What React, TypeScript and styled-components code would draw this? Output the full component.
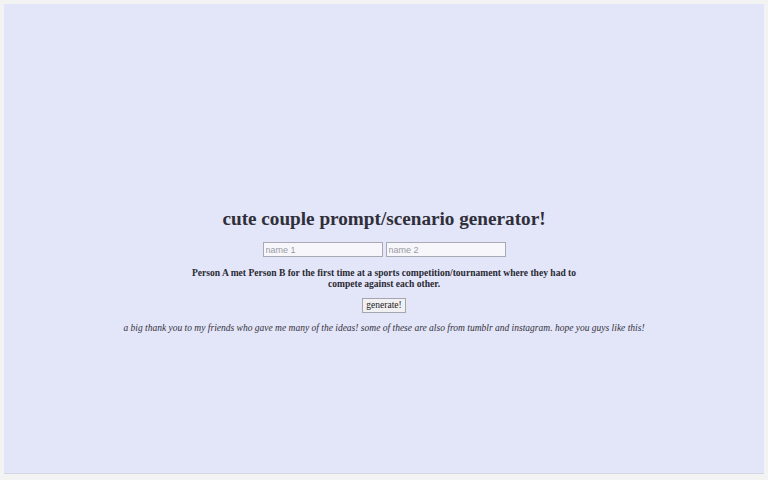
import React from "react";
import styled, { createGlobalStyle } from "styled-components";

const Global = createGlobalStyle`
  html, body {
    margin: 0;
    padding: 0;
    background: #f3f3f3;
  }
  body {
    font-family: "Liberation Serif", "Times New Roman", serif;
    color: #2e2e38;
  }
`;

const Page = styled.main`
  margin: 4px;
  height: 470px;
  box-sizing: border-box;
  background: #e3e5f8;
  border-bottom: 1px solid #d6d6e2;
  display: flex;
  flex-direction: column;
  align-items: center;
  padding-top: 203px;
`;

const Title = styled.h1`
  margin: 0;
  font-size: 19.2px;
  font-weight: bold;
  color: #2f2f3a;
  line-height: 24px;
`;

const Names = styled.div`
  display: flex;
  gap: 3px;
  margin-top: 11px;
`;

const NameInput = styled.input`
  box-sizing: border-box;
  width: 120px;
  height: 15px;
  padding: 0 2px;
  border: 1px solid #a9a9b4;
  background: #f6f6fb;
  font-family: "Liberation Sans", Arial, sans-serif;
  font-size: 9px;
  color: #333;
  outline: none;
  &::placeholder {
    color: #9a9aa2;
  }
`;

const Prompt = styled.p`
  margin: 10px 0 0;
  max-width: 396px;
  text-align: center;
  font-size: 9.55px;
  font-weight: bold;
  line-height: 11px;
  color: #2a2a33;
`;

const Generate = styled.button`
  margin-top: 9px;
  box-sizing: border-box;
  height: 15px;
  padding: 0 3px;
  border: 1px solid #a5a5ad;
  background: #f1f1f4;
  font-family: "Liberation Serif", "Times New Roman", serif;
  font-size: 9.5px;
  color: #222;
  line-height: 13px;
`;

const Thanks = styled.p`
  margin: 9px 0 0;
  font-size: 9.5px;
  font-style: italic;
  line-height: 12px;
  color: #33333d;
`;

export default function App() {
  return (
    <>
      <Global />
      <Page>
        <Title>cute couple prompt/scenario generator!</Title>
        <Names>
          <NameInput placeholder="name 1" />
          <NameInput placeholder="name 2" />
        </Names>
        <Prompt>
          Person A met Person B for the first time at a sports competition/tournament where they had to
          compete against each other.
        </Prompt>
        <Generate>generate!</Generate>
        <Thanks>
          a big thank you to my friends who gave me many of the ideas! some of these are also from tumblr
          and instagram. hope you guys like this!
        </Thanks>
      </Page>
    </>
  );
}
